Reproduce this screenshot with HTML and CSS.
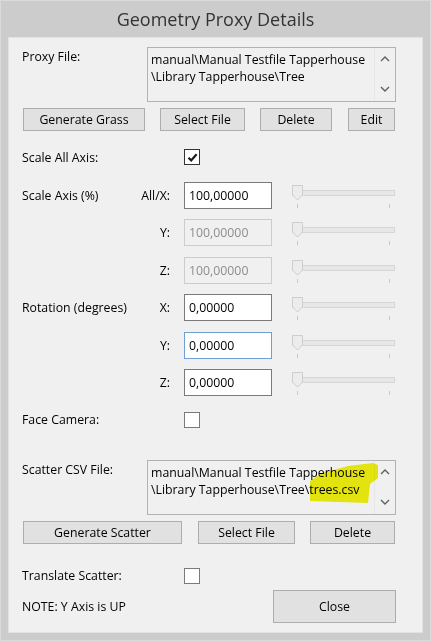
FILE: index.html
```html
<!DOCTYPE html>
<html>
<head>
<meta charset="utf-8">
<link rel="stylesheet" href="styles.css">
</head>
<body>
<div class="window">
  <div class="title">Geometry Proxy Details</div>
  <div class="panel">
    <div class="row file-row">
      <div class="label file-label">Proxy File:</div>
      <div class="filebox">
        <div class="filetext">manual\Manual Testfile Tapperhouse<br>\Library Tapperhouse\Tree</div>
        <div class="scroll">
          <svg width="10" height="6" viewBox="0 0 10 6"><path d="M1 5 L5 1 L9 5" fill="none" stroke="#606060" stroke-width="1.4"/></svg>
          <svg width="10" height="6" viewBox="0 0 10 6"><path d="M1 1 L5 5 L9 1" fill="none" stroke="#606060" stroke-width="1.4"/></svg>
        </div>
      </div>
    </div>
    <div class="btnrow btnrow1">
      <div class="btn b-grass">Generate Grass</div>
      <div class="btn b-sel1">Select File</div>
      <div class="btn b-del1">Delete</div>
      <div class="btn b-edit">Edit</div>
    </div>
    <div class="row check-row scale-all">
      <div class="label wide">Scale All Axis:</div>
      <div class="checkbox checked">
        <svg width="13" height="13" viewBox="0 0 13 13"><path d="M2.5 6.8 L5.2 9.4 L10.6 3.2" fill="none" stroke="#1a1a1a" stroke-width="2.2"/></svg>
      </div>
    </div>

    <div class="row axis-row first-axis">
      <div class="label">Scale Axis (%)</div>
      <div class="axis">All/X:</div>
      <div class="input">100,00000</div>
      <svg class="slider" width="104" height="27" viewBox="0 0 104 27"><rect x="0.5" y="8.5" width="102" height="5" fill="#e7e7e7" stroke="#d6d6d6"/><path d="M0.5 3.5 H10.5 V13 L5.5 18 L0.5 13 Z" fill="#ececec" stroke="#cdcdcd"/><line x1="5.5" y1="22" x2="5.5" y2="26" stroke="#c9c9c9"/><line x1="97.5" y1="22" x2="97.5" y2="26" stroke="#c9c9c9"/></svg>
    </div>
    <div class="row axis-row">
      <div class="label"></div>
      <div class="axis">Y:</div>
      <div class="input disabled">100,00000</div>
      <svg class="slider" width="104" height="27" viewBox="0 0 104 27"><rect x="0.5" y="8.5" width="102" height="5" fill="#e7e7e7" stroke="#d6d6d6"/><path d="M0.5 3.5 H10.5 V13 L5.5 18 L0.5 13 Z" fill="#ececec" stroke="#cdcdcd"/><line x1="5.5" y1="22" x2="5.5" y2="26" stroke="#c9c9c9"/><line x1="97.5" y1="22" x2="97.5" y2="26" stroke="#c9c9c9"/></svg>
    </div>
    <div class="row axis-row">
      <div class="label"></div>
      <div class="axis">Z:</div>
      <div class="input disabled">100,00000</div>
      <svg class="slider" width="104" height="27" viewBox="0 0 104 27"><rect x="0.5" y="8.5" width="102" height="5" fill="#e7e7e7" stroke="#d6d6d6"/><path d="M0.5 3.5 H10.5 V13 L5.5 18 L0.5 13 Z" fill="#ececec" stroke="#cdcdcd"/><line x1="5.5" y1="22" x2="5.5" y2="26" stroke="#c9c9c9"/><line x1="97.5" y1="22" x2="97.5" y2="26" stroke="#c9c9c9"/></svg>
    </div>
    <div class="row axis-row">
      <div class="label">Rotation (degrees)</div>
      <div class="axis">X:</div>
      <div class="input">0,00000</div>
      <svg class="slider" width="104" height="27" viewBox="0 0 104 27"><rect x="0.5" y="8.5" width="102" height="5" fill="#e7e7e7" stroke="#d6d6d6"/><path d="M0.5 3.5 H10.5 V13 L5.5 18 L0.5 13 Z" fill="#ececec" stroke="#cdcdcd"/><line x1="5.5" y1="22" x2="5.5" y2="26" stroke="#c9c9c9"/><line x1="97.5" y1="22" x2="97.5" y2="26" stroke="#c9c9c9"/></svg>
    </div>
    <div class="row axis-row">
      <div class="label"></div>
      <div class="axis">Y:</div>
      <div class="input focused">0,00000</div>
      <svg class="slider" width="104" height="27" viewBox="0 0 104 27"><rect x="0.5" y="8.5" width="102" height="5" fill="#e7e7e7" stroke="#d6d6d6"/><path d="M0.5 3.5 H10.5 V13 L5.5 18 L0.5 13 Z" fill="#ececec" stroke="#cdcdcd"/><line x1="5.5" y1="22" x2="5.5" y2="26" stroke="#c9c9c9"/><line x1="97.5" y1="22" x2="97.5" y2="26" stroke="#c9c9c9"/></svg>
    </div>
    <div class="row axis-row">
      <div class="label"></div>
      <div class="axis">Z:</div>
      <div class="input">0,00000</div>
      <svg class="slider" width="104" height="27" viewBox="0 0 104 27"><rect x="0.5" y="8.5" width="102" height="5" fill="#e7e7e7" stroke="#d6d6d6"/><path d="M0.5 3.5 H10.5 V13 L5.5 18 L0.5 13 Z" fill="#ececec" stroke="#cdcdcd"/><line x1="5.5" y1="22" x2="5.5" y2="26" stroke="#c9c9c9"/><line x1="97.5" y1="22" x2="97.5" y2="26" stroke="#c9c9c9"/></svg>
    </div>

    <div class="row check-row face-cam">
      <div class="label wide">Face Camera:</div>
      <div class="checkbox"></div>
    </div>

    <div class="row file-row scatter-row">
      <div class="label file-label">Scatter CSV File:</div>
      <div class="filebox">
        <svg class="highlight" width="240" height="50" viewBox="0 0 240 50"><path d="M163 21 L175 13 L201 6 L226 3 L231 5 L231 18 L223 24 L221 43 L163 41 Z" fill="#f2f20f"/></svg>
        <div class="filetext">manual\Manual Testfile Tapperhouse<br>\Library Tapperhouse\Tree\trees.csv</div>
        <div class="scroll">
          <svg width="10" height="6" viewBox="0 0 10 6"><path d="M1 5 L5 1 L9 5" fill="none" stroke="#606060" stroke-width="1.4"/></svg>
          <svg width="10" height="6" viewBox="0 0 10 6"><path d="M1 1 L5 5 L9 1" fill="none" stroke="#606060" stroke-width="1.4"/></svg>
        </div>
      </div>
    </div>
    <div class="btnrow btnrow2">
      <div class="btn b-scatter">Generate Scatter</div>
      <div class="btn b-sel2">Select File</div>
      <div class="btn b-del2">Delete</div>
    </div>

    <div class="row check-row translate">
      <div class="label wide">Translate Scatter:</div>
      <div class="checkbox"></div>
    </div>
    <div class="row note-row">
      <div class="label">NOTE: Y Axis is UP</div>
      <div class="btn b-close">Close</div>
    </div>
  </div>
</div>
</body>
</html>
```
FILE: styles.css
```css
* { box-sizing: border-box; }
html, body { margin: 0; padding: 0; }
body {
  width: 431px;
  height: 641px;
  background: #cccccc;
  font-family: "Open Sans", "Noto Sans", sans-serif;
  font-size: 12.3px;
  color: #000;
  overflow: hidden;
}
.window {
  width: 431px;
  height: 641px;
  border: 1px solid #dadada;
  padding: 0 7px;
}
.title {
  height: 36px;
  line-height: 37px;
  text-align: center;
  font-size: 18px;
  color: #333;
}
.panel {
  width: 415px;
  height: 596px;
  background: #f0f0f0;
  border: 1px solid #e2e2e2;
  padding: 9px 26px 0 13px;
  display: flex;
  flex-direction: column;
}
.row {
  display: flex;
  align-items: center;
}
.label {
  width: 116px;
  flex: none;
  white-space: nowrap;
}
.label.wide { width: 162px; }
.file-row { align-items: flex-start; }
.file-label { width: 125px; padding-top: 1px; }
.filebox {
  position: relative;
  width: 249px;
  height: 55px;
  border: 1px solid #b2b2b2;
  background: #f0f0f0;
  display: flex;
}
.filetext {
  position: relative;
  flex: 1;
  padding: 3px 0 0 3px;
  line-height: 17px;
  white-space: nowrap;
}
.highlight {
  position: absolute;
  left: -1px;
  top: -1px;
  mix-blend-mode: multiply;
}
.scroll {
  width: 21px;
  border-left: 1px solid #e6e6e6;
  display: flex;
  flex-direction: column;
  align-items: center;
  justify-content: space-between;
  padding: 8px 0 9px;
}
.btnrow { display: flex; margin-top: 6px; }
.btn {
  height: 23px;
  background: #e1e1e1;
  border: 1px solid #adadad;
  display: flex;
  align-items: center;
  justify-content: center;
  white-space: nowrap;
}
.btnrow .btn:first-child { margin-left: 1px; }
.b-grass { width: 122px; }
.b-sel1 { width: 85px; margin-left: 15px; }
.b-del1 { width: 72px; margin-left: 15px; }
.b-edit { width: 47px; margin-left: 16px; }
.b-scatter { width: 159px; }
.b-sel2 { width: 97px; margin-left: 16px; }
.b-del2 { width: 85px; margin-left: 15px; }
.check-row { height: 16px; }
.scale-all { margin-top: 18px; }
.checkbox {
  width: 16px;
  height: 16px;
  border: 1px solid #7a7a7a;
  background: #fff;
  display: flex;
  align-items: center;
  justify-content: center;
}
.checkbox.checked { border-color: #333; }
.axis-row { height: 27px; margin-top: 10.4px; }
.first-axis { margin-top: 17px; }
.axis {
  width: 32px;
  text-align: right;
  flex: none;
}
.input {
  width: 88px;
  height: 27px;
  margin-left: 14px;
  border: 1px solid #7a7a7a;
  background: #fff;
  padding-left: 4px;
  display: flex;
  align-items: center;
  flex: none;
}
.input.disabled {
  background: #f0f0f0;
  border-color: #cccccc;
  color: #8d8d8d;
}
.input.focused { border-color: #6f9fd6; }
.slider { margin-left: 20px; flex: none; }
.face-cam { margin-top: 16px; }
.scatter-row { margin-top: 32px; }
.translate { margin-top: 24px; }
.note-row {
  margin-top: 6px;
  justify-content: space-between;
  height: 33px;
}
.b-close { width: 123px; height: 33px; }
```
